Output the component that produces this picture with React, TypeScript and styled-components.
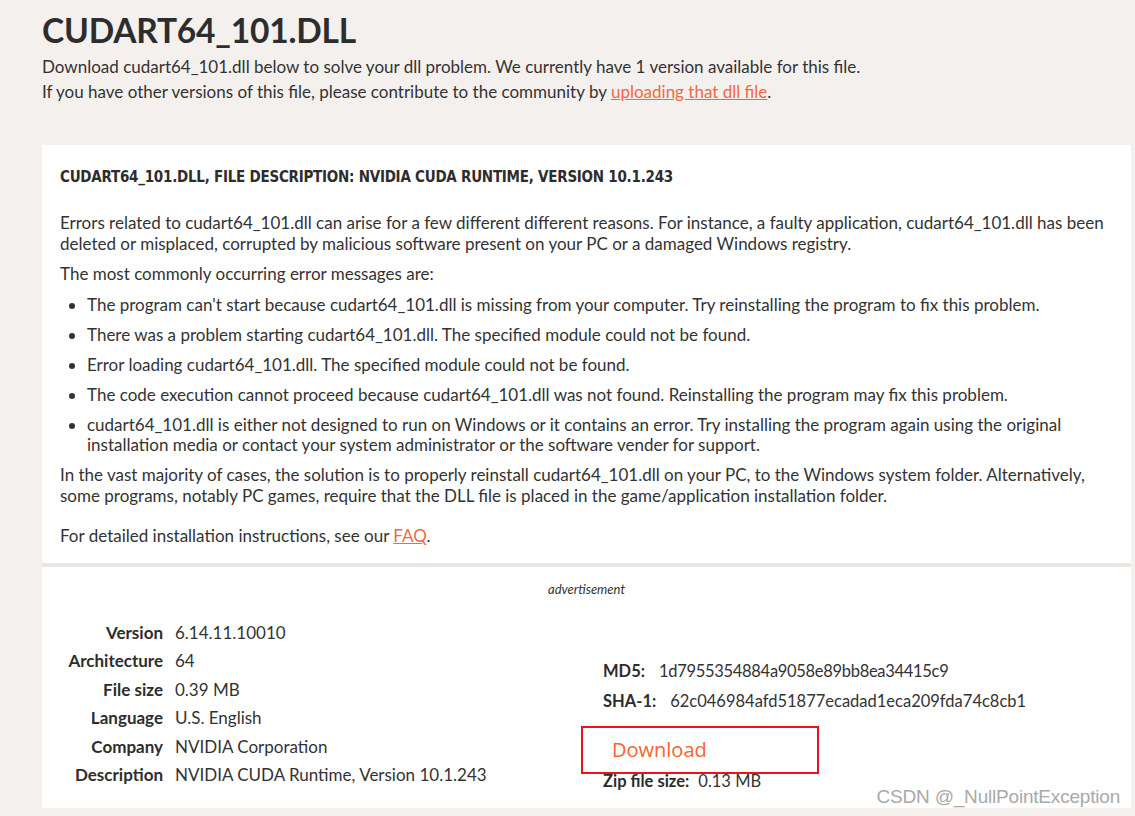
import React from 'react';
import styled, { createGlobalStyle } from 'styled-components';

const GlobalStyle = createGlobalStyle`
  html, body {
    margin: 0;
    padding: 0;
    background: #f4f0ed;
  }
  body {
    font-family: Lato, "Noto Sans", sans-serif;
    color: #333;
  }
`;

const Page = styled.div`
  position: relative;
  width: 1135px;
  height: 816px;
  overflow: hidden;
  padding: 8px 4px 0 42px;
  box-sizing: border-box;
`;

const Title = styled.h1`
  margin: 0;
  font-size: 33.5px;
  line-height: 44px;
  font-weight: 700;
  color: #2d2d2d;
  letter-spacing: -0.2px;
`;

const Intro = styled.p`
  margin: 2px 0 0;
  font-size: 17px;
  line-height: 25px;
`;

const Link = styled.a`
  color: #f2683f;
  text-decoration: underline;
`;

const Card = styled.section<{ top?: number }>`
  background: #fff;
  margin-top: ${p => p.top ?? 0}px;
  padding: 0 18px;
`;

const DescCard = styled(Card)`
  padding-top: 20px;
  padding-bottom: 16px;
`;

const CardTitle = styled.h2`
  margin: 0 0 24px;
  font-family: "Liberation Sans Narrow", "DejaVu Sans Condensed", sans-serif;
  font-size: 15px;
  line-height: 24px;
  font-weight: 700;
  letter-spacing: -0.25px;
  color: #2d2d2d;
`;

const Para = styled.p<{ gap?: number }>`
  margin: ${p => p.gap ?? 0}px 0 0;
  font-size: 17px;
  line-height: 20.5px;
`;

const List = styled.ul`
  margin: 10px 0 0;
  padding-left: 27px;
`;

const Item = styled.li`
  font-size: 17px;
  line-height: 20.5px;
  margin-bottom: 9.5px;
`;

const Separator = styled.div`
  height: 4px;
  background: #ece6e2;
`;

const InfoCard = styled(Card)`
  height: 241px;
`;

const Ad = styled.div`
  text-align: center;
  font-style: italic;
  font-size: 13px;
  line-height: 16px;
  padding-top: 14px;
  color: #333;
`;

const InfoRow = styled.div`
  display: flex;
  margin-top: 22px;
`;

const Specs = styled.dl`
  display: grid;
  grid-template-columns: 103px auto;
  grid-auto-rows: 28.6px;
  column-gap: 12px;
  margin: 0;
  width: 543px;
`;

const SpecLabel = styled.dt`
  text-align: right;
  font-weight: 700;
  font-size: 17px;
  line-height: 28.6px;
  color: #2d2d2d;
`;

const SpecValue = styled.dd`
  margin: 0;
  font-size: 17px;
  line-height: 28.6px;
`;

const Hashes = styled.div`
  display: flex;
  flex-direction: column;
  padding-top: 37px;
`;

const HashRow = styled.div<{ gap: number }>`
  display: flex;
  gap: ${p => p.gap}px;
  font-size: 16.5px;
  line-height: 30px;
`;

const HashLabel = styled.span`
  font-weight: 700;
  color: #2d2d2d;
`;

const HashValue = styled.span<{ spacing?: number }>`
  letter-spacing: ${p => p.spacing ?? 0}px;
`;

const DownloadBox = styled.div`
  margin: 10px 0 0 -22px;
  width: 238px;
  height: 48px;
  box-sizing: border-box;
  border: 2px solid #e5141e;
  padding-left: 29px;
  display: flex;
  align-items: center;
  position: relative;
  z-index: 1;
`;

const DownloadLink = styled.span`
  font-family: "Open Sans", sans-serif;
  font-size: 20px;
  color: #f7642a;
`;

const ZipRow = styled(HashRow)`
  margin-top: -8px;
`;

const Watermark = styled.div`
  position: absolute;
  right: 15px;
  bottom: 8px;
  font-family: "Liberation Sans", Arial, sans-serif;
  font-size: 19px;
  color: #a9a9a9;
  letter-spacing: -0.2px;
`;

const errors = [
  "The program can't start because cudart64_101.dll is missing from your computer. Try reinstalling the program to fix this problem.",
  'There was a problem starting cudart64_101.dll. The specified module could not be found.',
  'Error loading cudart64_101.dll. The specified module could not be found.',
  'The code execution cannot proceed because cudart64_101.dll was not found. Reinstalling the program may fix this problem.',
  'cudart64_101.dll is either not designed to run on Windows or it contains an error. Try installing the program again using the original installation media or contact your system administrator or the software vender for support.',
];

const specs = [
  ['Version', '6.14.11.10010'],
  ['Architecture', '64'],
  ['File size', '0.39 MB'],
  ['Language', 'U.S. English'],
  ['Company', 'NVIDIA Corporation'],
  ['Description', 'NVIDIA CUDA Runtime, Version 10.1.243'],
];

export default function App() {
  return (
    <Page>
      <GlobalStyle />
      <Title>CUDART64_101.DLL</Title>
      <Intro>
        Download cudart64_101.dll below to solve your dll problem. We currently have 1 version available for this file.
        <br />
        If you have other versions of this file, please contribute to the community by{' '}
        <Link>uploading that dll file</Link>.
      </Intro>

      <DescCard top={41}>
        <CardTitle>CUDART64_101.DLL, FILE DESCRIPTION: NVIDIA CUDA RUNTIME, VERSION 10.1.243</CardTitle>
        <Para>
          Errors related to cudart64_101.dll can arise for a few different different reasons. For instance, a faulty application,
          cudart64_101.dll has been deleted or misplaced, corrupted by malicious software present on your PC or a damaged
          Windows registry.
        </Para>
        <Para gap={10}>The most commonly occurring error messages are:</Para>
        <List>
          {errors.map(e => (
            <Item key={e}>{e}</Item>
          ))}
        </List>
        <Para>
          In the vast majority of cases, the solution is to properly reinstall cudart64_101.dll on your PC, to the Windows system
          folder. Alternatively, some programs, notably PC games, require that the DLL file is placed in the game/application
          installation folder.
        </Para>
        <Para gap={20}>
          For detailed installation instructions, see our <Link>FAQ</Link>.
        </Para>
      </DescCard>
      <Separator />
      <InfoCard>
        <Ad>advertisement</Ad>
        <InfoRow>
          <Specs>
            {specs.map(([k, v]) => (
              <React.Fragment key={k}>
                <SpecLabel>{k}</SpecLabel>
                <SpecValue>{v}</SpecValue>
              </React.Fragment>
            ))}
          </Specs>
          <Hashes>
            <HashRow gap={14}>
              <HashLabel>MD5:</HashLabel>
              <HashValue spacing={-0.3}>1d7955354884a9058e89bb8ea34415c9</HashValue>
            </HashRow>
            <HashRow gap={14}>
              <HashLabel>SHA-1:</HashLabel>
              <HashValue>62c046984afd51877ecadad1eca209fda74c8cb1</HashValue>
            </HashRow>
            <DownloadBox>
              <DownloadLink>Download</DownloadLink>
            </DownloadBox>
            <ZipRow gap={9}>
              <HashLabel>Zip file size:</HashLabel>
              <span>0.13 MB</span>
            </ZipRow>
          </Hashes>
        </InfoRow>
      </InfoCard>
      <Watermark>CSDN @_NullPointException</Watermark>
    </Page>
  );
}
